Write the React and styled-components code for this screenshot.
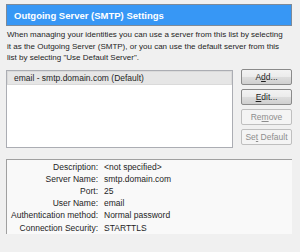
import React from 'react';
import styled, { createGlobalStyle } from 'styled-components';

const GlobalStyle = createGlobalStyle`
  html, body {
    margin: 0;
    padding: 0;
    background: #f0f0f0;
  }
  body {
    font-family: "Liberation Sans", Arial, sans-serif;
    font-size: 8.5px;
    color: #1e1e1e;
  }
`;

const Page = styled.div`
  width: 300px;
  height: 252px;
  padding: 4px 8px 0 6px;
  box-sizing: border-box;
  overflow: hidden;
`;

const Banner = styled.div`
  height: 22px;
  box-sizing: border-box;
  background: #3797f5;
  border: 1px solid #7d8a99;
  color: #fff;
  font-weight: bold;
  font-size: 9.5px;
  display: flex;
  align-items: center;
  padding-left: 7px;
`;

const Intro = styled.p`
  margin: 3px 0 0 1px;
  font-size: 8px;
  line-height: 11.5px;
  white-space: nowrap;
`;

const ListArea = styled.div`
  display: flex;
  gap: 8px;
  margin-top: 6px;
`;

const ServerList = styled.div`
  width: 227px;
  height: 78px;
  box-sizing: border-box;
  background: #fff;
  border: 1px solid #abadb3;
  padding: 0;
`;

const ListItem = styled.div`
  height: 12px;
  display: flex;
  align-items: center;
  padding-left: 6px;
  background: ${p => (p.$selected ? '#e6e6e6' : 'transparent')};
  border: 1px solid ${p => (p.$selected ? '#dadada' : 'transparent')};
`;

const Buttons = styled.div`
  display: flex;
  flex-direction: column;
  gap: 4px;
  margin-top: -1px;
`;

const Button = styled.button`
  width: 51px;
  height: 16px;
  box-sizing: border-box;
  padding: 0;
  font-family: inherit;
  font-size: 8.5px;
  border-radius: 2px;
  border: 1px solid ${p => (p.disabled ? '#bfbfbf' : '#8a8a8a')};
  background: ${p =>
    p.disabled ? '#f4f4f4' : 'linear-gradient(#f3f3f3, #ebebeb 50%, #dddddd 51%, #cfcfcf)'};
  color: ${p => (p.disabled ? '#8d8d8d' : '#1e1e1e')};
  text-align: center;
`;

const Key = styled.span`
  text-decoration: underline;
`;

const Details = styled.div`
  margin-top: 11px;
  width: 286px;
  height: 75px;
  box-sizing: border-box;
  background: #f9f9f9;
  border-top: 1px solid #a0a0a0;
  border-left: 1px solid #a0a0a0;
  padding-top: 1px;
  display: grid;
  grid-template-columns: 91px 1fr;
  column-gap: 6px;
  grid-auto-rows: 12.2px;
  align-items: center;
`;

const Label = styled.span`
  text-align: right;
`;

const Value = styled.span``;

const details = [
  ['Description:', '<not specified>'],
  ['Server Name:', 'smtp.domain.com'],
  ['Port:', '25'],
  ['User Name:', 'email'],
  ['Authentication method:', 'Normal password'],
  ['Connection Security:', 'STARTTLS'],
];

export default function App() {
  return (
    <Page>
      <GlobalStyle />
      <Banner>Outgoing Server (SMTP) Settings</Banner>
      <Intro>
        When managing your identities you can use a server from this list by selecting
        <br />
        it as the Outgoing Server (SMTP), or you can use the default server from this
        <br />
        list by selecting "Use Default Server".
      </Intro>
      <ListArea>
        <ServerList>
          <ListItem $selected>email - smtp.domain.com (Default)</ListItem>
        </ServerList>
        <Buttons>
          <Button>A<Key>d</Key>d...</Button>
          <Button><Key>E</Key>dit...</Button>
          <Button disabled>Re<Key>m</Key>ove</Button>
          <Button disabled>Se<Key>t</Key> Default</Button>
        </Buttons>
      </ListArea>
      <Details>
        {details.map(([l, v]) => (
          <React.Fragment key={l}>
            <Label>{l}</Label>
            <Value>{v}</Value>
          </React.Fragment>
        ))}
      </Details>
    </Page>
  );
}
